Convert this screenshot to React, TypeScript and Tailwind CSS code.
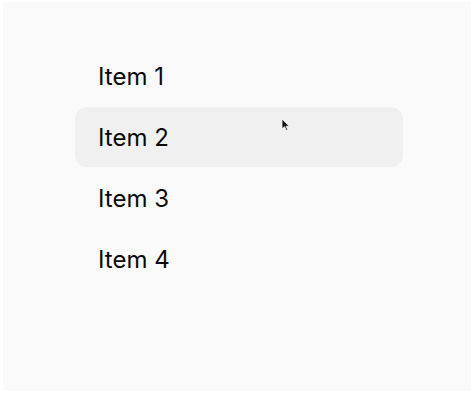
import React from "react";

export default function App() {
  const items = ["Item 1", "Item 2", "Item 3", "Item 4"];
  return (
    <div className="w-[474px] h-[394px] bg-white pt-[2px] px-[3px] pb-[3px]" style={{ fontFamily: "Inter, 'Noto Sans', sans-serif" }}>
      <div className="relative h-full bg-[#fafafa] pt-[44px] pl-[72px] pr-[68px]">
        <div className="flex flex-col gap-px">
          {items.map((it, i) => (
            <div
              key={it}
              className={`h-[60px] flex items-center pl-[23px] pt-[2px] rounded-[12px] text-[24px] text-[#0a0a0a] ${i === 1 ? "bg-[#f0f0f0]" : ""}`}
            >
              {it}
            </div>
          ))}
        </div>
        <svg className="absolute left-[278px] top-[116px]" width="10" height="14" viewBox="0 0 10 14">
          <path d="M1 1 L1 11 L3.5 8.7 L5.3 12.5 L6.8 11.8 L5 8.2 L8.3 8.2 Z" fill="#111" stroke="#fff" strokeWidth="0.8" />
        </svg>
      </div>
    </div>
  );
}
